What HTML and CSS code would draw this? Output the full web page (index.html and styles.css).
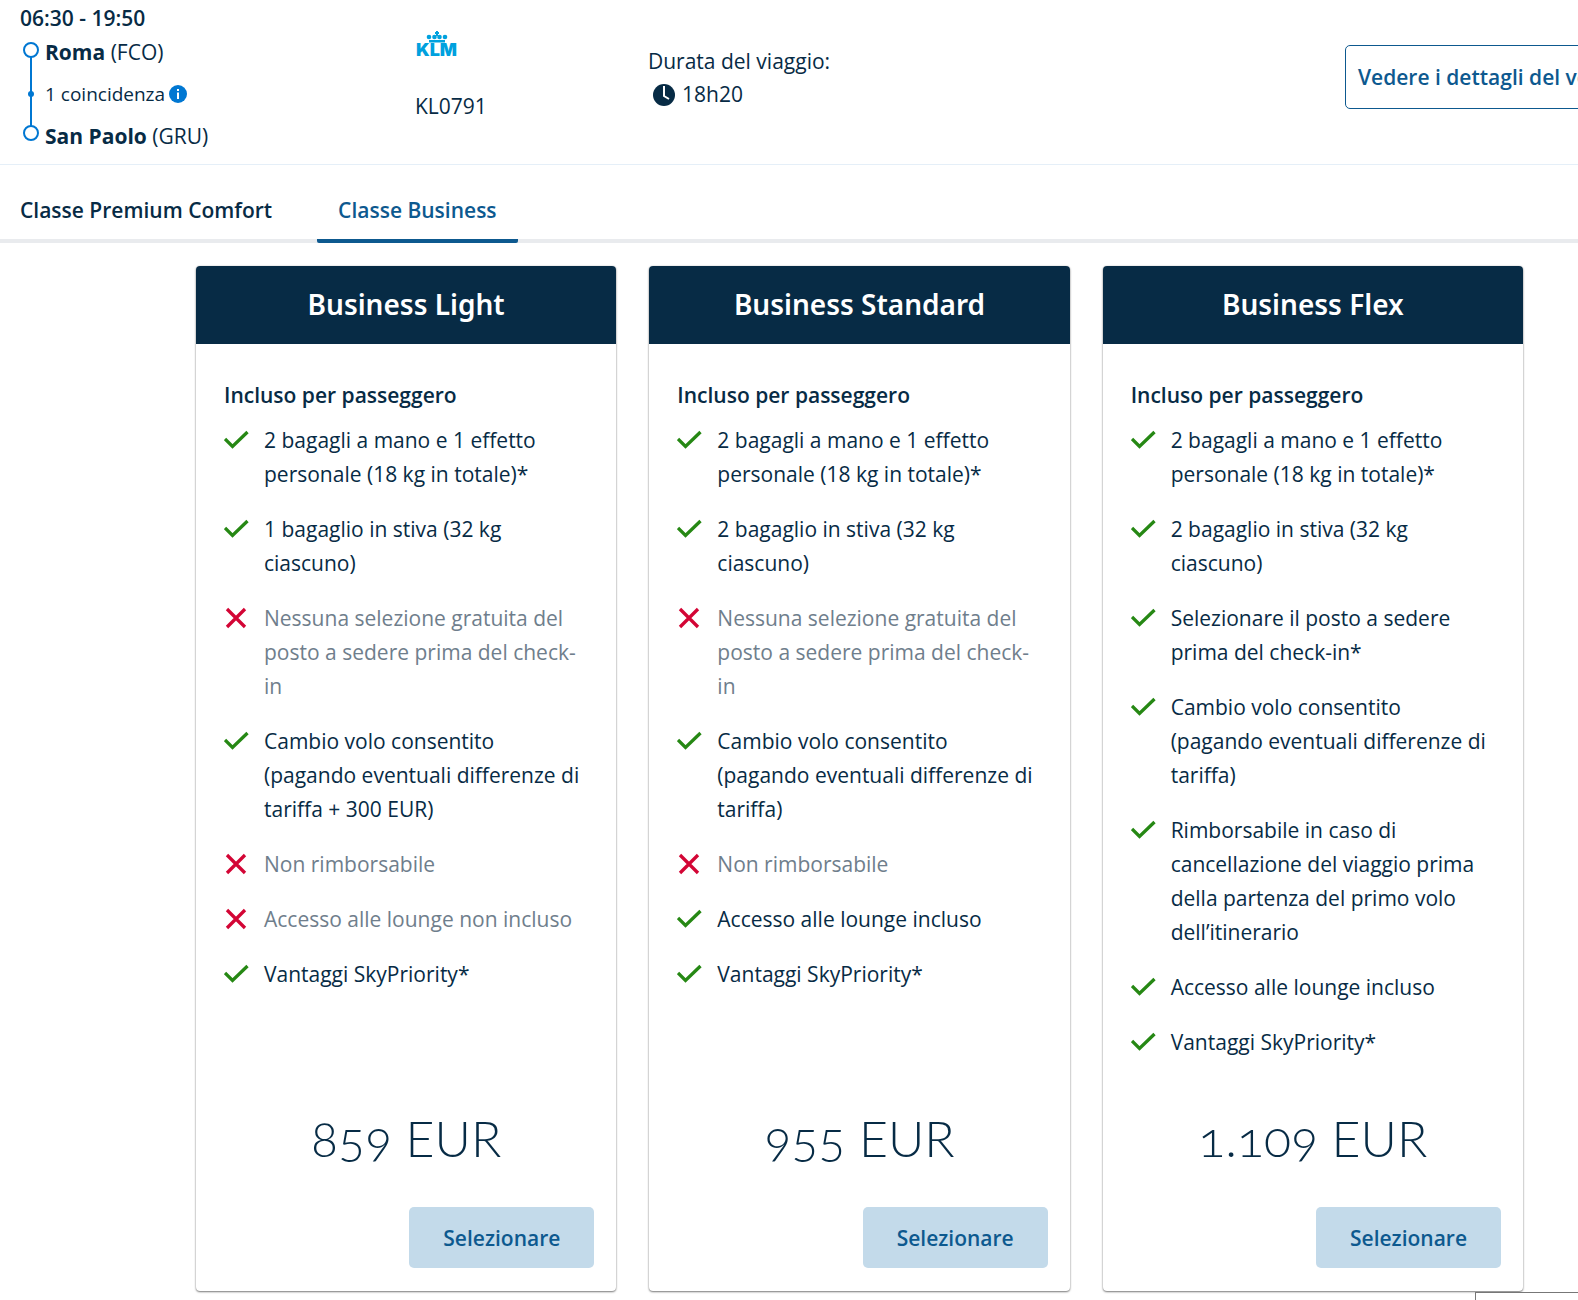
FILE: index.html
```html
<!DOCTYPE html>
<html lang="it">
<head>
<meta charset="utf-8">
<meta name="viewport" content="width=device-width, initial-scale=1">
<title>Roma - San Paolo</title>
<link rel="stylesheet" href="styles.css">
</head>
<body>
<svg class="sprite" aria-hidden="true">
  <symbol id="yes" viewBox="0 0 26 22"><path d="M1 10 8.500 17.500 23.500 3" fill="none" stroke="#268814" stroke-width="3.300"/></symbol>
  <symbol id="no" viewBox="0 0 26 22"><path d="M3 2 21 20M21 2 3 20" fill="none" stroke="#d30535" stroke-width="3.300"/></symbol>
</svg>

<header class="flight">
  <div class="route">
    <p class="times">06:30 - 19:50</p>
    <div class="stops">
      <svg class="line" viewBox="0 0 16 100" aria-hidden="true">
        <path d="M8 15V85" stroke="#0077d2" stroke-width="2"/>
        <circle cx="8" cy="8" r="7" fill="#fff" stroke="#0077d2" stroke-width="2"/>
        <circle cx="8" cy="52" r="3" fill="#0077d2"/>
        <circle cx="8" cy="91" r="7" fill="#fff" stroke="#0077d2" stroke-width="2"/>
      </svg>
      <div class="places">
        <p><strong>Roma</strong> (FCO)</p>
        <p class="connection">1 coincidenza
          <svg class="info" viewBox="0 0 18 18" aria-hidden="true"><circle cx="9" cy="9" r="9" fill="#0077d2"/><path d="M9 4V6M9 7.500V14" stroke="#fff" stroke-width="2"/></svg>
        </p>
        <p><strong>San Paolo</strong> (GRU)</p>
      </div>
    </div>
  </div>
  <div class="carrier">
    <div class="logo">
      <svg class="crown" viewBox="0 0 22 12" aria-hidden="true"><path d="M3 9H19V11.500H3Z"/><path d="M9 2H13M11 0V5" stroke="#00a1de" stroke-width="2"/><circle cx="3" cy="6" r="2.300"/><circle cx="8.500" cy="6" r="2.300"/><circle cx="13.500" cy="6" r="2.300"/><circle cx="19" cy="6" r="2.300"/></svg>
      <span>KLM</span>
    </div>
    <p>KL0791</p>
  </div>
  <div class="duration">
    <p>Durata del viaggio:</p>
    <p class="clock">
      <svg viewBox="0 0 24 24" aria-hidden="true"><circle cx="12" cy="12" r="11" fill="#072b45"/><path d="M12 3V13L17 16" fill="none" stroke="#fff" stroke-width="2"/></svg>
      18h20
    </p>
  </div>
  <button class="details" type="button">Vedere i dettagli del volo</button>
</header>

<nav class="tabs">
  <a href="#premium">Classe Premium Comfort</a>
  <a class="active" href="#business" aria-current="page">Classe Business</a>
</nav>

<main class="fares" id="business">
  <article class="card">
    <h2>Business Light</h2>
    <div class="body">
      <h3>Incluso per passeggero</h3>
      <ul>
        <li><svg><use href="#yes"/></svg>2 bagagli a mano e 1 effetto personale (18 kg in totale)*</li>
        <li><svg><use href="#yes"/></svg>1 bagaglio in stiva (32 kg ciascuno)</li>
        <li class="off"><svg><use href="#no"/></svg>Nessuna selezione gratuita del posto a sedere prima del check-in</li>
        <li><svg><use href="#yes"/></svg>Cambio volo consentito (pagando eventuali differenze di tariffa + 300 EUR)</li>
        <li class="off"><svg><use href="#no"/></svg>Non rimborsabile</li>
        <li class="off"><svg><use href="#no"/></svg>Accesso alle lounge non incluso</li>
        <li><svg><use href="#yes"/></svg>Vantaggi SkyPriority*</li>
      </ul>
    </div>
    <p class="price">859 EUR</p>
    <button class="select" type="button">Selezionare</button>
  </article>

  <article class="card">
    <h2>Business Standard</h2>
    <div class="body">
      <h3>Incluso per passeggero</h3>
      <ul>
        <li><svg><use href="#yes"/></svg>2 bagagli a mano e 1 effetto personale (18 kg in totale)*</li>
        <li><svg><use href="#yes"/></svg>2 bagaglio in stiva (32 kg ciascuno)</li>
        <li class="off"><svg><use href="#no"/></svg>Nessuna selezione gratuita del posto a sedere prima del check-in</li>
        <li><svg><use href="#yes"/></svg>Cambio volo consentito (pagando eventuali differenze di tariffa)</li>
        <li class="off"><svg><use href="#no"/></svg>Non rimborsabile</li>
        <li><svg><use href="#yes"/></svg>Accesso alle lounge incluso</li>
        <li><svg><use href="#yes"/></svg>Vantaggi SkyPriority*</li>
      </ul>
    </div>
    <p class="price">955 EUR</p>
    <button class="select" type="button">Selezionare</button>
  </article>

  <article class="card">
    <h2>Business Flex</h2>
    <div class="body">
      <h3>Incluso per passeggero</h3>
      <ul>
        <li><svg><use href="#yes"/></svg>2 bagagli a mano e 1 effetto personale (18 kg in totale)*</li>
        <li><svg><use href="#yes"/></svg>2 bagaglio in stiva (32 kg ciascuno)</li>
        <li><svg><use href="#yes"/></svg>Selezionare il posto a sedere prima del check-in*</li>
        <li><svg><use href="#yes"/></svg>Cambio volo consentito (pagando eventuali differenze di tariffa)</li>
        <li><svg><use href="#yes"/></svg>Rimborsabile in caso di cancellazione del viaggio prima della partenza del primo volo dell’itinerario</li>
        <li><svg><use href="#yes"/></svg>Accesso alle lounge incluso</li>
        <li><svg><use href="#yes"/></svg>Vantaggi SkyPriority*</li>
      </ul>
    </div>
    <p class="price">1.109 EUR</p>
    <button class="select" type="button">Selezionare</button>
  </article>
</main>
<div class="dock"></div>
</body>
</html>
```
FILE: styles.css
```css
* { box-sizing: border-box; }

body {
  margin: 0;
  overflow-x: hidden;
  background: #fff;
  color: #072b45;
  font: 400 21px/34px "Open Sans", "Noto Sans", sans-serif;
}

p, h2, h3, ul { margin: 0; padding: 0; }
svg { display: block; flex: none; }
button { font: inherit; font-weight: 600; color: #0d598f; white-space: nowrap; cursor: pointer; }
.sprite { position: absolute; width: 0; height: 0; }

.flight {
  display: grid;
  grid-template-columns: 395px 233px 1fr 233px;
  padding: 1px 0 11px 20px;
  border-bottom: 1px solid #e5eff8;
}
.times { font-weight: 600; }
.stops { display: flex; gap: 6px; padding-left: 3px; }
.line { width: 16px; height: 100px; margin-top: 7px; }
.connection { display: flex; align-items: center; gap: 4px; height: 50px; font-size: 19px; }
.info { width: 18px; height: 18px; }

.carrier { padding-top: 30px; }
.logo { display: flex; flex-direction: column; align-items: center; width: 43px; color: #00a1de; font: 900 18px/14px Inter, sans-serif; }
.crown { width: 22px; height: 12px; fill: #00a1de; }
.carrier p { margin-top: 32px; }

.duration { padding-top: 44px; line-height: 33px; }
.clock { display: flex; align-items: center; gap: 6px; padding-left: 4px; }
.clock svg { width: 24px; height: 24px; }

.details {
  justify-self: start;
  height: 64px;
  margin-top: 44px;
  padding: 0 12px;
  background: #fff;
  border: 1px solid #0d598f;
  border-radius: 5px;
}

.tabs {
  display: flex;
  gap: 24px;
  padding: 28px 0 0;
  box-shadow: inset 0 -4px #e9ebee;
}
.tabs a {
  padding: 0 21px 12px;
  border-bottom: 4px solid transparent;
  color: #072b45;
  font-weight: 600;
  text-decoration: none;
}
.tabs a:first-child { padding-left: 20px; }
.tabs .active { color: #0d598f; border-color: #0d598f; border-radius: 2px; }

.fares {
  display: grid;
  grid-template-columns: repeat(3, 1fr);
  gap: 33px;
  padding: 23px 55px 8px 196px;
}
.card {
  display: flex;
  flex-direction: column;
  padding-bottom: 23px;
  border-radius: 4px;
  box-shadow: 0 1px 2px rgba(0, 0, 0, .5), 0 0 2px rgba(0, 0, 0, .15);
}
.card h2 {
  padding-bottom: 2px;
  background: #072b45;
  border-radius: 4px 4px 0 0;
  color: #fff;
  font: 600 28px/76px "Noto Sans", sans-serif;
  text-align: center;
}
.body { flex: 1; padding: 34px 28px 0 28px; }
.body h3 { margin-bottom: 11px; font-size: 21px; font-weight: 600; }
.body ul { display: grid; gap: 21px; list-style: none; }
.body li { display: grid; grid-template-columns: 26px 1fr; gap: 14px; }
.body li svg { width: 26px; height: 22px; margin-top: 6px; }
.off { color: #6f7e8c; }
.price {
  margin: 51px 0 41px;
  font: 300 50px/56px Lato, sans-serif;
  font-variant-numeric: oldstyle-nums;
  text-align: center;
}
.select {
  align-self: flex-end;
  height: 61px;
  margin-right: 22px;
  padding: 0 34px;
  background: #c3daea;
  border: 0;
  border-radius: 5px;
}

.dock {
  position: fixed;
  right: 0;
  bottom: 0;
  width: 103px;
  height: 8px;
  background: #fff;
  border: solid #777;
  border-width: 1px 0 0 1px;
}
```
